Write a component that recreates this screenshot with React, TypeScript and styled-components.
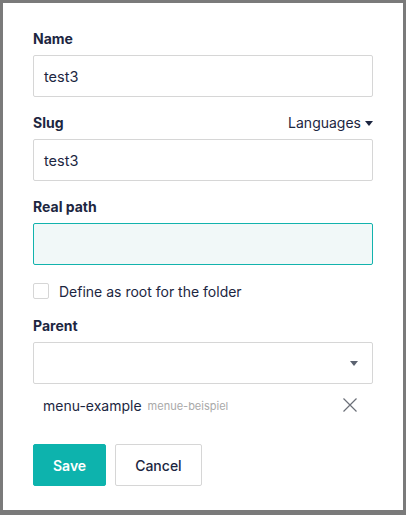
import React from "react";
import styled, { createGlobalStyle } from "styled-components";

const Global = createGlobalStyle`
  html, body { margin: 0; padding: 0; background: #7a7a7a; }
  body { font-family: Inter, "Noto Sans", sans-serif; -webkit-font-smoothing: antialiased; }
  * { box-sizing: border-box; }
`;

const Backdrop = styled.div`
  width: 406px;
  height: 515px;
  padding: 3px 3px 5px 3px;
  background: #7a7a7a;
`;

const Card = styled.form`
  width: 400px;
  height: 507px;
  background: #fff;
  padding: 26px 30px 0 30px;
  display: flex;
  flex-direction: column;
`;

const Field = styled.div<{ $mt?: number }>`
  display: flex;
  flex-direction: column;
  margin-top: ${(p) => p.$mt ?? 16}px;
`;

const LabelRow = styled.div`
  display: flex;
  justify-content: space-between;
  align-items: center;
  height: 20px;
  margin-bottom: 6px;
`;

const Label = styled.label`
  font-size: 14px;
  font-weight: 700;
  color: #1c2641;
  line-height: 20px;
`;

const LangToggle = styled.span`
  display: flex;
  align-items: center;
  gap: 4px;
  font-size: 14px;
  color: #1c2641;
  line-height: 20px;
`;

const Caret = styled.span<{ $color?: string }>`
  width: 0;
  height: 0;
  border-left: 4.5px solid transparent;
  border-right: 4.5px solid transparent;
  border-top: 5px solid ${(p) => p.$color ?? "#1c2641"};
`;

const Input = styled.div<{ $focus?: boolean; $select?: boolean }>`
  height: 42px;
  border: 1px solid ${(p) => (p.$focus ? "#12b3ad" : "#d6d6d6")};
  background: ${(p) => (p.$focus ? "#f1f8f8" : "#fff")};
  border-radius: 2px;
  padding: 0 ${(p) => (p.$select ? 14 : 10)}px 0 10px;
  display: flex;
  align-items: center;
  justify-content: space-between;
  font-size: 14.5px;
  color: #1c2641;
`;

const CheckRow = styled.div`
  display: flex;
  align-items: center;
  gap: 10px;
  height: 20px;
  margin-top: 16px;
`;

const Box = styled.span`
  width: 16px;
  height: 16px;
  border: 1px solid #d6d6d6;
  border-radius: 2px;
  background: #fff;
`;

const CheckText = styled.span`
  font-size: 14px;
  color: #1c2641;
`;

const Chip = styled.div`
  display: flex;
  align-items: center;
  height: 20px;
  margin-top: 11px;
  padding: 0 16px 0 10px;
`;

const ChipName = styled.span`
  font-size: 14px;
  color: #1c2641;
`;

const ChipSlug = styled.span`
  font-size: 11px;
  color: #a9a9a9;
  margin-left: 6px;
  margin-top: 1px;
`;

const Spacer = styled.span`
  flex: 1;
`;

const Buttons = styled.div`
  display: flex;
  gap: 9px;
  margin-top: 29px;
`;

const Button = styled.button<{ $primary?: boolean }>`
  height: 42px;
  padding: 0 19px;
  border-radius: 2px;
  font-family: Inter, sans-serif;
  font-size: 14px;
  font-weight: ${(p) => (p.$primary ? 600 : 500)};
  border: 1px solid ${(p) => (p.$primary ? "#0db3ad" : "#d6d6d6")};
  background: ${(p) => (p.$primary ? "#0db3ad" : "#fff")};
  color: ${(p) => (p.$primary ? "#fff" : "#1c2641")};
`;

export default function App() {
  return (
    <>
      <Global />
      <Backdrop>
        <Card onSubmit={(e) => e.preventDefault()}>
          <Field $mt={0}>
            <LabelRow>
              <Label>Name</Label>
            </LabelRow>
            <Input>test3</Input>
          </Field>
          <Field>
            <LabelRow>
              <Label>Slug</Label>
              <LangToggle>
                Languages <Caret />
              </LangToggle>
            </LabelRow>
            <Input>test3</Input>
          </Field>
          <Field>
            <LabelRow>
              <Label>Real path</Label>
            </LabelRow>
            <Input $focus />
          </Field>
          <CheckRow>
            <Box />
            <CheckText>Define as root for the folder</CheckText>
          </CheckRow>
          <Field $mt={15}>
            <LabelRow>
              <Label>Parent</Label>
            </LabelRow>
            <Input $select>
              <Spacer />
              <Caret $color="#5b6270" />
            </Input>
          </Field>
          <Chip>
            <ChipName>menu-example</ChipName>
            <ChipSlug>menue-beispiel</ChipSlug>
            <Spacer />
            <svg width="14" height="14" viewBox="0 0 14 14">
              <path d="M0.5 0.5L13.5 13.5M13.5 0.5L0.5 13.5" stroke="#6b6f78" strokeWidth="1.2" fill="none" />
            </svg>
          </Chip>
          <Buttons>
            <Button $primary type="submit">Save</Button>
            <Button type="button">Cancel</Button>
          </Buttons>
        </Card>
      </Backdrop>
    </>
  );
}
